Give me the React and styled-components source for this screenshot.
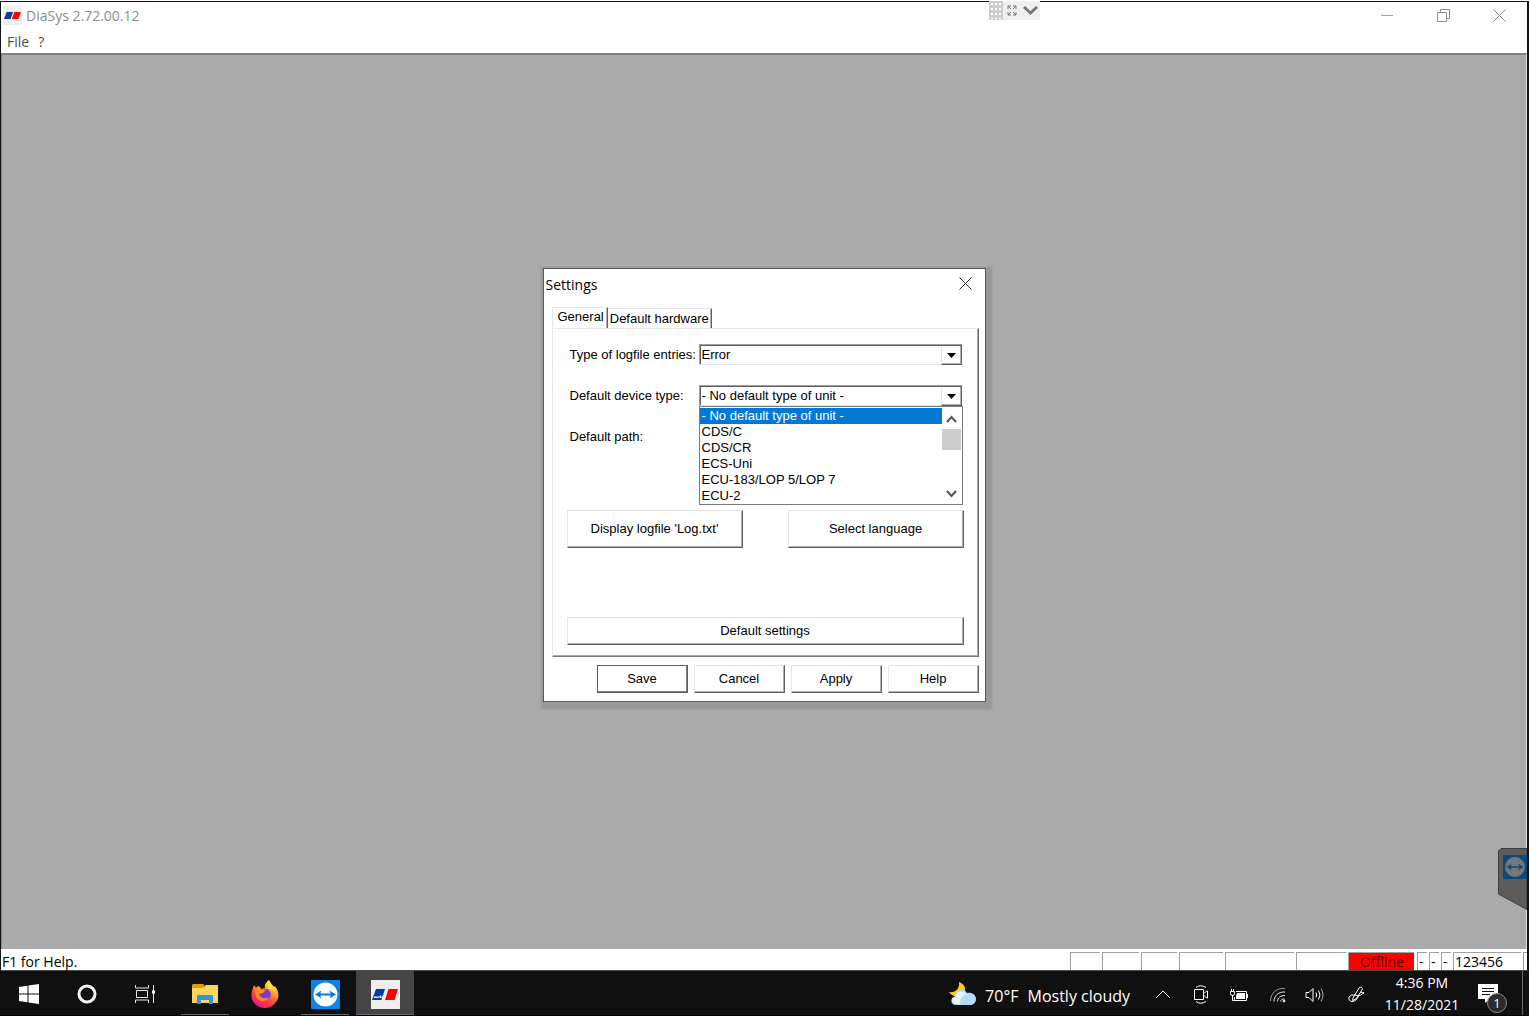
import React from 'react';
import styled, { createGlobalStyle } from 'styled-components';

const GlobalStyle = createGlobalStyle`
  * {
    box-sizing: border-box;
  }

  body {
    margin: 0;
    overflow: hidden;
    background: #ffffff;
    font-family: "Open Sans", "Noto Sans", sans-serif;
    font-size: 14px;
    color: #000000;
  }

  button, select {
    font: inherit;
    color: inherit;
    border: none;
    border-radius: 0;
    background: none;
    padding: 0;
    margin: 0;
  }
`;

const Screen = styled.div`
  display: flex;
  flex-direction: column;
  height: 100vh;
  padding-top: 1px;
`;

const AppWindow = styled.main`
  position: relative;
  flex: 1;
  min-height: 0;
  display: flex;
  flex-direction: column;
  border: 1px solid #141414;
  border-right-width: 2px;
  border-bottom-color: #4a4a4a;
`;

const TitleBar = styled.header`
  display: flex;
  align-items: center;
  height: 27px;
  padding-left: 2px;
  color: #8c8c8c;
`;

const AppIcon = styled.svg`
  width: 19px;
  height: 19px;
  margin-right: 4px;
`;

const WindowButtons = styled.div`
  display: flex;
  margin-left: auto;
`;

const WindowButton = styled.button`
  display: flex;
  align-items: center;
  justify-content: center;
  width: 56px;
  height: 27px;
`;

const MenuBar = styled.nav`
  display: flex;
  align-items: center;
  height: 24px;
  padding-left: 6px;
  gap: 9px;
  color: #4c4c4c;
`;

const Workspace = styled.section`
  flex: 1;
  min-height: 0;
  display: flex;
  align-items: center;
  justify-content: center;
  padding-bottom: 34px;
  background: #aaaaaa;
  border-top: 2px solid #828282;
  border-left: 1px solid #828282;
  border-right: 1px solid #dddddd;
`;

const RemoteBar = styled.div`
  position: absolute;
  top: -1px;
  left: 65%;
  display: flex;
  align-items: center;
  width: 51px;
  height: 19px;
  margin-left: -4px;
  background: #f0f0f0;
`;

const RemoteTab = styled.button`
  position: absolute;
  right: 0;
  bottom: 60px;
  width: 29px;
  height: 62px;

  svg {
    display: block;
  }
`;

/* settings dialog */

const Dialog = styled.section`
  width: 443px;
  padding: 0 6px 8px 8px;
  border: 1px solid #5a5a5a;
  background: #ffffff;
  box-shadow: 2px 3px 2px 4px #989898;
  font-family: "Liberation Sans", Arial, sans-serif;
  font-size: 13px;
  line-height: 16px;
`;

const DialogHeader = styled.header`
  display: flex;
  align-items: center;
  justify-content: space-between;
  height: 31px;
  margin: 0 0 7px -6px;
  font-family: "Open Sans", "Noto Sans", sans-serif;
  font-size: 14px;
`;

const CloseButton = styled.button`
  display: flex;
  align-items: center;
  justify-content: center;
  width: 27px;
  height: 28px;
  margin-bottom: 3px;
`;

const TabList = styled.div`
  display: flex;
  align-items: flex-end;
  height: 21px;
`;

const Tab = styled.button`
  height: ${props => props.$active ? '21px' : '20px'};
  padding: ${props => props.$active ? '0 3px 2px 5px' : '0 2px'};
  border-top: 1px solid #e6e6e6;
  border-left: ${props => props.$active ? '1px solid #e6e6e6' : 'none'};
  border-right: 1px solid #5f5f5f;
  box-shadow: inset -1px 0 #b4b4b4;
`;

const TabPanel = styled.div`
  padding: 15px 14px 11px 14px;
  border: 1px solid #e6e6e6;
  border-right-color: #6c6c6c;
  border-bottom-color: #7c7c7c;
  box-shadow: inset -1px -1px #acacac;
`;

const FormRow = styled.div`
  display: grid;
  grid-template-columns: 129px 1fr;
  align-items: center;
  height: 21px;
  margin-bottom: 20px;
  padding: 0 2px 0 3px;
`;

const FieldLabel = styled.label`
  white-space: nowrap;
`;

const ComboBox = styled.div`
  position: relative;
  display: flex;
  height: 21px;
  border: 1px solid #e6e6e6;
  border-top-color: #a0a0a0;
  border-left-color: #a0a0a0;
  border-right: 0;
  box-shadow: inset 1px 1px #606060;
`;

const ComboSelect = styled.select`
  flex: 1;
  appearance: none;
  outline: none;
  padding-left: 2px;
`;

const ComboArrow = styled.span`
  position: absolute;
  top: 1px;
  right: 0;
  display: flex;
  align-items: center;
  justify-content: center;
  width: 21px;
  height: 19px;
  border-left: 1px solid #e6e6e6;
  border-right: 1px solid #5f5f5f;
  border-bottom: 1px solid #5f5f5f;
  box-shadow: inset -1px -1px #b0b0b0;
  pointer-events: none;
`;

const DropDown = styled.div`
  position: absolute;
  z-index: 1;
  top: 20px;
  left: -1px;
  right: -1px;
  display: flex;
  padding-top: 1px;
  border: 1px solid #7a7a7a;
  background: #ffffff;
`;

const OptionList = styled.ul`
  flex: 1;
  margin: 0;
  padding: 0;
  list-style: none;
`;

const Option = styled.li`
  height: 16px;
  padding-left: 2px;
  background: ${props => props.$selected ? '#0078d7' : 'transparent'};
  color: ${props => props.$selected ? '#ffffff' : '#000000'};
`;

const ScrollBar = styled.div`
  display: flex;
  flex-direction: column;
  align-items: center;
  width: 20px;
`;

const ScrollButton = styled.button`
  display: flex;
  align-items: center;
  justify-content: center;
  width: 20px;
  height: 21px;
`;

const ScrollThumb = styled.div`
  width: 19px;
  height: 21px;
  margin-bottom: auto;
  background: #cdcdcd;
`;

const ButtonRow = styled.div`
  display: flex;
  justify-content: space-between;
  margin-top: 63px;
`;

const PushButton = styled.button`
  width: ${props => props.$width || '91px'};
  height: ${props => props.$height || '28px'};
  border: 1px solid ${props => props.$primary ? '#606060' : '#e6e6e6'};
  border-right-color: #606060;
  border-bottom-color: #606060;
  box-shadow: inset -1px -1px ${props => props.$primary ? '#7c7c7c' : '#b0b0b0'};
`;

const DefaultsRow = styled.div`
  margin-top: 69px;
`;

const DialogFooter = styled.footer`
  display: flex;
  justify-content: flex-end;
  gap: 6px;
  margin-top: 8px;
`;

/* status bar */

const StatusBar = styled.footer`
  display: flex;
  align-items: flex-end;
  height: 21px;
  padding-left: 1px;
  line-height: 17px;
`;

const StatusPanes = styled.div`
  display: flex;
  gap: 2px;
  margin-left: auto;
`;

const StatusPane = styled.div`
  width: ${props => props.$width}px;
  height: 18px;
  margin-right: ${props => props.$alert ? '1px' : '0'};
  border-top: 1px solid #a0a0a0;
  border-left: 1px solid #a0a0a0;
  padding-left: 1px;
  text-align: ${props => props.$alert ? 'center' : 'left'};
  background: ${props => props.$alert ? '#ff0000' : 'transparent'};
  color: ${props => props.$alert ? '#5a0000' : '#000000'};
`;

/* windows taskbar */

const TaskBar = styled.footer`
  display: flex;
  height: 45px;
  border-bottom: 1px solid #000000;
  background: #101010;
  color: #ffffff;
`;

const TaskButton = styled.button`
  display: flex;
  align-items: center;
  justify-content: center;
  position: relative;
  width: ${props => props.$wide ? '60px' : '58px'};
  margin-left: ${props => props.$active ? '1px' : '0'};
  padding-top: 2px;
  background: ${props => props.$active ? '#454545' : 'transparent'};

  &::after {
    content: "";
    display: ${props => props.$running ? 'block' : 'none'};
    position: absolute;
    bottom: 0;
    left: ${props => props.$active ? '0' : '6px'};
    right: ${props => props.$active ? '0' : '6px'};
    height: 1px;
    background: #5d6a7a;
  }
`;

const TaskList = styled.div`
  display: flex;
  margin-left: 1px;
`;

const Tray = styled.div`
  display: flex;
  align-items: center;
  margin-left: auto;
`;

const Weather = styled.button`
  display: flex;
  align-items: center;
  gap: 9px;
  margin-right: 14px;
  padding-top: 6px;
  font-size: 16px;
  line-height: 22px;
`;

const WeatherIcon = styled.svg`
  width: 27px;
  height: 23px;
  margin-bottom: 6px;
`;

const TrayButton = styled.button`
  display: flex;
  align-items: center;
  justify-content: center;
  width: ${props => props.$wide ? '45px' : '38px'};
  height: 44px;
  padding-top: 3px;
`;

const Clock = styled.time`
  display: flex;
  flex-direction: column;
  align-items: center;
  width: 86px;
  padding-top: 2px;
  line-height: 22px;
`;

const Notifications = styled.button`
  position: relative;
  display: flex;
  align-items: flex-start;
  width: 57px;
  height: 44px;
  padding: 13px 0 0 13px;
`;

const Badge = styled.span`
  position: absolute;
  left: 22px;
  top: 22px;
  width: 20px;
  height: 20px;
  border: 1px solid #8a8a8a;
  border-radius: 50%;
  background: #2b2b2b;
  font-size: 13px;
  line-height: 18px;
  text-align: center;
`;

const ShowDesktop = styled.button`
  width: 7px;
  height: 44px;
  border-left: 1px solid #6a6a6a;
`;

const devices = [
  '- No default type of unit -',
  'CDS/C',
  'CDS/CR',
  'ECS-Uni',
  'ECU-183/LOP 5/LOP 7',
  'ECU-2'
];

const statusPanes = [
  { width: 30 },
  { width: 37 },
  { width: 36 },
  { width: 44 },
  { width: 69 },
  { width: 50 },
  { width: 66, text: 'Offline', alert: true },
  { width: 10, text: '-' },
  { width: 10, text: '-' },
  { width: 10, text: '-' },
  { width: 68, text: '123456' },
  { width: 4 }
];

function DiaSysLogo() {
  return (
    <>
      <path d="M7.500 15h10l-4 11h-10z" fill="#003f9a"/>
      <path d="M19.500 15h10l-4 11h-10z" fill="#ff0000"/>
    </>
  )
}

function TeamViewerIcon({ size, dim }) {
  const blue = dim ? '#0c4a7c' : '#0b7be0';
  return (
    <svg width={size} height={size} viewBox="0 0 29 29">
      <rect width="29" height="29" rx="1" fill={dim ? '#0c4a7c' : '#0a84ea'}/>
      <circle cx="14.5" cy="14.5" r="12" fill={dim ? '#777777' : '#ffffff'}/>
      <path d="M4 14.5l6.5-4-1.2 3h10.4l-1.2-3 6.5 4-6.5 4 1.2-3H9.3l1.2 3z" fill={blue}/>
    </svg>
  )
}

function CrossIcon({ size, color }) {
  return (
    <svg width={size} height={size} viewBox="0 0 13 13" stroke={color} fill="none">
      <path d="M.5.5l12 12M12.5.5l-12 12"/>
    </svg>
  )
}

function Triangle() {
  return (
    <svg width="9" height="5" viewBox="0 0 9 5">
      <path d="M0 0h9L4.500 5z"/>
    </svg>
  )
}

function SettingsDialog() {
  return (
    <Dialog role="dialog" aria-labelledby="settings-title">
      <DialogHeader>
        <span id="settings-title">Settings</span>
        <CloseButton aria-label="Close settings">
          <CrossIcon size={13} color="#333333"/>
        </CloseButton>
      </DialogHeader>
      <TabList role="tablist">
        <Tab role="tab" aria-selected="true" $active>General</Tab>
        <Tab role="tab" aria-selected="false">Default hardware</Tab>
      </TabList>
      <TabPanel role="tabpanel">
        <FormRow>
          <FieldLabel htmlFor="logfile">Type of logfile entries:</FieldLabel>
          <ComboBox>
            <ComboSelect id="logfile" defaultValue="Error">
              <option>Error</option>
            </ComboSelect>
            <ComboArrow><Triangle/></ComboArrow>
          </ComboBox>
        </FormRow>
        <FormRow>
          <FieldLabel htmlFor="device">Default device type:</FieldLabel>
          <ComboBox>
            <ComboSelect id="device" defaultValue={devices[0]}>
              {devices.map(name => <option key={name}>{name}</option>)}
            </ComboSelect>
            <ComboArrow><Triangle/></ComboArrow>
            <DropDown>
              <OptionList role="listbox" aria-label="Default device type">
                {devices.map((name, i) => (
                  <Option key={name} role="option" aria-selected={i === 0} $selected={i === 0}>
                    {name}
                  </Option>
                ))}
              </OptionList>
              <ScrollBar>
                <ScrollButton aria-label="Scroll up">
                  <svg width="11" height="8" viewBox="0 0 11 8" fill="none" stroke="#555555" strokeWidth="2">
                    <path d="M1 7l4.500-5L10 7"/>
                  </svg>
                </ScrollButton>
                <ScrollThumb/>
                <ScrollButton aria-label="Scroll down">
                  <svg width="11" height="8" viewBox="0 0 11 8" fill="none" stroke="#555555" strokeWidth="2">
                    <path d="M1 1l4.500 5L10 1"/>
                  </svg>
                </ScrollButton>
              </ScrollBar>
            </DropDown>
          </ComboBox>
        </FormRow>
        <FormRow>
          <span>Default path:</span>
        </FormRow>
        <ButtonRow>
          <PushButton $width="176px" $height="38px">Display logfile 'Log.txt'</PushButton>
          <PushButton $width="176px" $height="38px">Select language</PushButton>
        </ButtonRow>
        <DefaultsRow>
          <PushButton $width="100%">Default settings</PushButton>
        </DefaultsRow>
      </TabPanel>
      <DialogFooter>
        <PushButton $primary>Save</PushButton>
        <PushButton>Cancel</PushButton>
        <PushButton>Apply</PushButton>
        <PushButton>Help</PushButton>
      </DialogFooter>
    </Dialog>
  )
}

function WindowsTaskBar() {
  return (
    <TaskBar>
      <TaskButton aria-label="Start">
        <svg width="20" height="20" viewBox="0 0 20 20" fill="#ffffff">
          <path d="M0 3l8.500-1.300v7.800H0zM9.500 1.500L20 0v9.500H9.500zM0 10.500h8.500v7.800L0 17zM9.500 10.500H20V20L9.500 18.500z"/>
        </svg>
      </TaskButton>
      <TaskButton aria-label="Cortana">
        <svg width="20" height="20" viewBox="0 0 20 20" fill="none" stroke="#f2f2f2" strokeWidth="3">
          <circle cx="10" cy="10" r="8"/>
        </svg>
      </TaskButton>
      <TaskButton aria-label="Task view">
        <svg width="20" height="20" viewBox="0 0 20 20" fill="none" stroke="#e6e6e6">
          <path d="M.5 1v3h13V1M.5 19v-3h13v3M1.500 6.500h11v7h-11zM18.500 1v18"/>
          <path d="M17 6.500h3v3h-3z" fill="#ffffff" stroke="none"/>
        </svg>
      </TaskButton>
      <TaskList>
        <TaskButton aria-label="File Explorer" $wide $running>
          <svg width="26" height="22" viewBox="0 0 26 22">
            <path d="M0 4h12l2-2h12v18H0z" fill="#ffd65c"/>
            <path d="M1 1h10l2 2-2 2H0V2z" fill="#e69a00"/>
            <path d="M5 21v-8q0-1 1-1h14q1 0 1 1v8h-4v-4H9v4z" fill="#2f96e4"/>
          </svg>
        </TaskButton>
        <TaskButton aria-label="Firefox" $wide>
          <svg width="28" height="28" viewBox="0 0 28 28">
            <defs>
              <linearGradient id="fox" x1="0.800" y1="0" x2="0.300" y2="1">
                <stop offset="0" stopColor="#fff04a"/>
                <stop offset="0.400" stopColor="#ff9a1f"/>
                <stop offset="0.700" stopColor="#ff3a48"/>
                <stop offset="1" stopColor="#e31587"/>
              </linearGradient>
            </defs>
            <path d="M18 0c1 3 4 5 5 7l1-1c3 4 4 8 3 12-2 6-7 10-13 10C6 28 0 22 .5 15 .6 11 2 8 3 5l2 3 3-2 2 3 4-1c-1-3 1-6 4-8z" fill="url(#fox)"/>
            <circle cx="14" cy="14.500" r="5.800" fill="#7a3ad6"/>
            <path d="M4 8l4-2 2 3 5 1-3 3-4 1c1 5 7 5 10 3-2 6-13 6-14-4z" fill="#ff8a1e"/>
            <path d="M19 1c0 4 5 6 5 12-1-3-3-4-6-4-2-2-2-5 1-8z" fill="#ffe23d"/>
          </svg>
        </TaskButton>
        <TaskButton aria-label="TeamViewer" $wide $running>
          <TeamViewerIcon size={29}/>
        </TaskButton>
        <TaskButton aria-label="DiaSys" $active $running>
          <svg width="29" height="29" viewBox="0 0 29 29">
            <rect width="29" height="29" fill="#eeeeee"/>
            <path d="M5 9h9l-3.500 11H1z" fill="#003f9a"/>
            <path d="M17.500 9h9.500l-3.500 11H14z" fill="#ff0000"/>
            <path d="M3 18l1-1.500 1 1.500 1-1.500 1 1.500M8 16v2M9.500 15.500V18M11.500 16l-1 2" stroke="#ffffff" fill="none"/>
          </svg>
        </TaskButton>
      </TaskList>
      <Tray>
        <Weather>
          <WeatherIcon viewBox="0 0 27 23">
            <path d="M10 0c6 2 8 8 4 12-4 4-11 3-14-2 6 1 11-3 10-10z" fill="#ffc91a"/>
            <path d="M7 23c-6 0-6-8-1-8.500C6 8 15 5 18 11c5-1 9 2 9 6s-3 6-6 6z" fill="#b4dafa"/>
            <path d="M7 22c-5 0-5-6-1-6.500C7 9 15 8 17 12.500c-4 1-6 5-6 9.500z" fill="#e8f5ff"/>
          </WeatherIcon>
          <span>70°F</span>
          <span>Mostly cloudy</span>
        </Weather>
        <TrayButton aria-label="Show hidden icons">
          <svg width="16" height="9" viewBox="0 0 16 9" fill="none" stroke="#ffffff">
            <path d="M1 8l7-7 7 7"/>
          </svg>
        </TrayButton>
        <TrayButton aria-label="Meet now">
          <svg width="16" height="19" viewBox="0 0 16 19" fill="none" stroke="#ffffff">
            <path d="M1.500 4.500h9v10h-9zM10.500 9l3-3h1v7h-1l-3-3M3 2.500q4.500-3.500 10 0M3 16.500q4.500 3.500 10 0"/>
          </svg>
        </TrayButton>
        <TrayButton aria-label="Battery">
          <svg width="20" height="14" viewBox="0 0 20 14" fill="none" stroke="#ffffff">
            <path d="M7 3.500h10.500v9H5.500V9M18.500 6v4M1.500 3.500h4v2q0 2-2 2t-2-2zM2.500 1v2M4.500 1v2M3.500 7v5.500h2"/>
            <path d="M8 5h8v6H7V8z" fill="#ffffff" stroke="none"/>
          </svg>
        </TrayButton>
        <TrayButton aria-label="Network">
          <svg width="17" height="17" viewBox="0 0 17 17" fill="none" stroke="#e8e8e8">
            <path d="M1.500 15C1.500 7 8 1.500 16 2.500" stroke="#999999"/>
            <path d="M5 15.500C5 9.500 10 5.500 16 6M8.500 15.500c0-3.500 3.500-6.500 7.500-6M11.500 15.500c0-1.500 2-3 4-2.500"/>
            <circle cx="15" cy="15" r="1" fill="#ffffff"/>
          </svg>
        </TrayButton>
        <TrayButton aria-label="Volume">
          <svg width="20" height="16" viewBox="0 0 20 16" fill="none" stroke="#ffffff">
            <path d="M1 5.500h3l4-4v13l-4-4H1zM11 5.500q1.500 2.500 0 5M13.500 3.500q3 4.500 0 9"/>
            <path d="M16 1.500q4 6.500 0 13" stroke="#aaaaaa"/>
          </svg>
        </TrayButton>
        <TrayButton aria-label="Windows Ink" $wide>
          <svg width="18" height="17" viewBox="0 0 18 17" fill="none" stroke="#ffffff">
            <path d="M5 12L11 2q1-1.500 2.500-.5t.5 2.500L8 13l-3.500 1.500zM1 11q2-3 6-2 6 2 9-3M1 11q-1 4 3 4.500 5 0 7-7M12 6q3 0 4 2"/>
          </svg>
        </TrayButton>
        <Clock>
          <span>4:36 PM</span>
          <span>11/28/2021</span>
        </Clock>
        <Notifications aria-label="Notifications">
          <svg width="20" height="20" viewBox="0 0 20 20">
            <path d="M0 0h20v15h-8l-5 4v-4H0z" fill="#ffffff"/>
            <path d="M4 4.500h12M4 7.500h12M4 10.500h8" stroke="#101010"/>
          </svg>
          <Badge>1</Badge>
        </Notifications>
        <ShowDesktop aria-label="Show desktop"/>
      </Tray>
    </TaskBar>
  )
}

export default function App() {
  return (
    <Screen>
      <GlobalStyle/>
      <AppWindow>
        <TitleBar>
          <AppIcon viewBox="2 6 29 29">
            <rect x="2" y="6" width="29" height="29" fill="#f0f0f0"/>
            <DiaSysLogo/>
          </AppIcon>
          <span>DiaSys 2.72.00.12</span>
          <WindowButtons>
            <WindowButton aria-label="Minimize">
              <svg width="12" height="1" viewBox="0 0 12 1"><path d="M0 .5h12" stroke="#a0a0a0"/></svg>
            </WindowButton>
            <WindowButton aria-label="Restore">
              <svg width="13" height="13" viewBox="0 0 13 13" fill="none" stroke="#8c8c8c">
                <path d="M.5 3.500h9v9h-9zM3.500 3V.5h9v9H10"/>
              </svg>
            </WindowButton>
            <WindowButton aria-label="Close">
              <CrossIcon size={13} color="#8c8c8c"/>
            </WindowButton>
          </WindowButtons>
        </TitleBar>
        <MenuBar>
          <button>File</button>
          <button>?</button>
        </MenuBar>
        <Workspace>
          <SettingsDialog/>
        </Workspace>
        <StatusBar>
          <span>F1 for Help.</span>
          <StatusPanes>
            {statusPanes.map((pane, i) => (
              <StatusPane key={i} $width={pane.width} $alert={pane.alert}>{pane.text}</StatusPane>
            ))}
          </StatusPanes>
        </StatusBar>
        <RemoteBar>
          <svg width="51" height="19" viewBox="0 0 51 19" fill="none">
            <path d="M0 0h14v19H0z" fill="#cccccc"/>
            <path d="M2 3h11M2 8h11M2 13h11M2 17.500h11" stroke="#ffffff" strokeWidth="2" strokeDasharray="2 2"/>
            <path d="M22 8l-3-3m0 3V5h3M24 8l3-3m-3 0h3v3M22 11l-3 3m0-3v3h3M24 11l3 3m-3 0h3v-3" stroke="#777777"/>
            <path d="M35 6l6.500 6L48 6" stroke="#777777" strokeWidth="3"/>
          </svg>
        </RemoteBar>
        <RemoteTab aria-label="TeamViewer panel">
          <svg width="29" height="62" viewBox="0 0 29 62">
            <path d="M3 .5h26v61L.5 46V3z" fill="#5c5c5c" stroke="#3f3f3f"/>
            <g transform="translate(5 7)"><TeamViewerIcon size={24} dim/></g>
          </svg>
        </RemoteTab>
      </AppWindow>
      <WindowsTaskBar/>
    </Screen>
  )
}
